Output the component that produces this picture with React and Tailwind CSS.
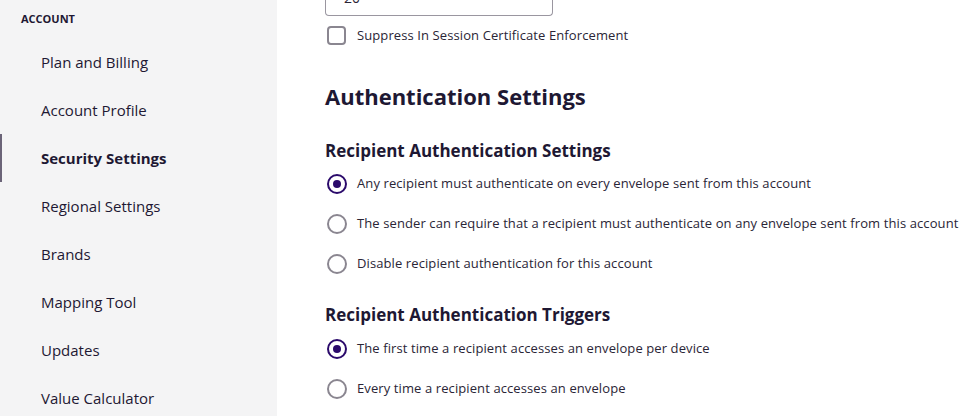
import React from 'react';

const navItems = [
  'Plan and Billing',
  'Account Profile',
  'Security Settings',
  'Regional Settings',
  'Brands',
  'Mapping Tool',
  'Updates',
  'Value Calculator',
];

function Radio({ checked, label }) {
  return (
    <label className="flex items-center h-10 gap-[10px]">
      <span
        className={
          'ml-[2px] w-[20px] h-[20px] rounded-full border-2 flex items-center justify-center shrink-0 ' +
          (checked ? 'border-[#2b0a6b]' : 'border-[#8a8690]')
        }
      >
        {checked && <span className="w-[8px] h-[8px] rounded-full bg-[#2b0a6b]" />}
      </span>
      <span className="text-[13px] tracking-[0.1px] text-[#2a2536] whitespace-nowrap">{label}</span>
    </label>
  );
}

export default function App() {
  return (
    <div className="flex w-[979px] h-[416px] overflow-hidden bg-white text-[#1e1833]" style={{ fontFamily: '"Open Sans", "Noto Sans", sans-serif' }}>
      <aside className="w-[277px] shrink-0 bg-[#f4f4f5]">
        <div className="pl-[21px] pt-[11px] text-[11px] font-bold h-[38px]">ACCOUNT</div>
        <nav className="flex flex-col">
          {navItems.map((item) => (
            <div
              key={item}
              className={
                'h-[48px] flex items-center pl-[39px] text-[15px] border-l-2 ' +
                (item === 'Security Settings' ? 'border-[#6b6478] font-bold' : 'border-transparent')
              }
            >
              {item}
            </div>
          ))}
        </nav>
      </aside>

      <main className="flex-1 pl-[48px]">
        <div className="w-[228px] h-[17px] -mt-[1px] border border-[#9a96a0] border-t-0 rounded-b-[4px] relative overflow-hidden">
          <span className="absolute left-[18px] -top-[11px] text-[14px] leading-[20px] text-[#2a2536]">20</span>
        </div>
        <label className="flex items-center gap-[11px] mt-[10px]">
          <span className="ml-[2px] w-[19px] h-[19px] rounded-[4px] border-2 border-[#8a8690]" />
          <span className="text-[13px] tracking-[0.1px] text-[#2a2536]">Suppress In Session Certificate Enforcement</span>
        </label>

        <h1 className="mt-[36px] text-[22px] font-bold leading-[28px]">Authentication Settings</h1>

        <h2 className="mt-[30px] text-[17px] font-bold leading-[22px]">Recipient Authentication Settings</h2>
        <div className="mt-[2px] flex flex-col">
          <Radio checked label="Any recipient must authenticate on every envelope sent from this account" />
          <Radio label="The sender can require that a recipient must authenticate on any envelope sent from this account" />
          <Radio label="Disable recipient authentication for this account" />
        </div>

        <h2 className="mt-[20px] text-[17px] font-bold leading-[22px]">Recipient Authentication Triggers</h2>
        <div className="mt-[3px] flex flex-col">
          <Radio checked label="The first time a recipient accesses an envelope per device" />
          <Radio label="Every time a recipient accesses an envelope" />
        </div>
      </main>
    </div>
  );
}
